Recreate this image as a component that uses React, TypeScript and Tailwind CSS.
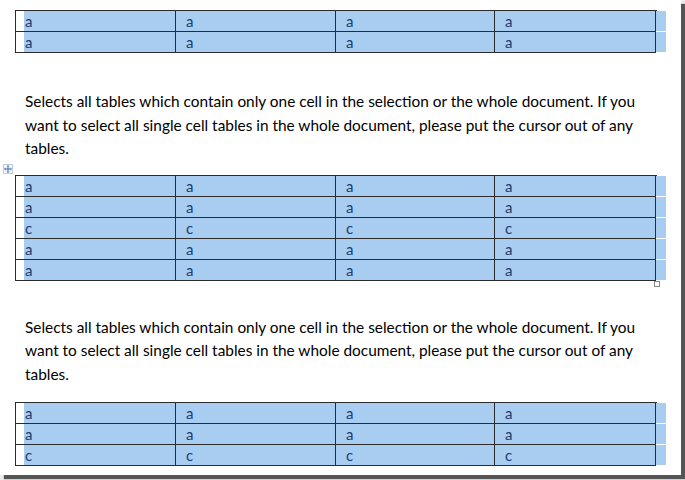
const FONT = { fontFamily: "Lato, 'Open Sans', sans-serif" };

type Row = string;

function TableRow({ letter }: { letter: Row }) {
  return (
    <div className="flex h-[21px]">
      <div className="flex border-l border-b border-[#2b2b2b]">
        <div className="w-[160px] h-full border-r border-[#2b2b2b]">
          <div className="ml-[8px] h-full bg-[#a9cdf1] pl-[1px] leading-[20px] text-[#1d3d6e]">{letter}</div>
        </div>
        <div className="w-[160px] h-full border-r border-[#2b2b2b] bg-[#a9cdf1] pl-[10px] leading-[20px] text-[#1d3d6e]">
          {letter}
        </div>
        <div className="w-[159px] h-full border-r border-[#2b2b2b] bg-[#a9cdf1] pl-[10px] leading-[20px] text-[#1d3d6e]">
          {letter}
        </div>
        <div className="w-[161px] h-full border-r border-[#2b2b2b] bg-[#a9cdf1] pl-[10px] leading-[20px] text-[#1d3d6e]">
          {letter}
        </div>
      </div>
      <div className="w-[10px] h-[20px] bg-[#a9cdf1]" />
    </div>
  );
}

function Table({ rows, handles }: { rows: Row[]; handles?: boolean }) {
  return (
    <div className="relative ml-[15px] w-fit text-[15px]">
      {handles && (
        <div className="absolute left-[-12px] top-[-11px] w-[10px] h-[10px] border border-[#c2ccd8] bg-[#f6f8fb] flex items-center justify-center">
          <svg width="8" height="8" viewBox="0 0 8 8">
            <path d="M4 1.5V6.5M1.5 4H6.5" stroke="#3a6cb4" strokeWidth="1" />
            <path d="M4 0L2.5 1.6H5.5ZM4 8L2.5 6.4H5.5ZM0 4L1.6 2.5V5.5ZM8 4L6.4 2.5V5.5Z" fill="#3a6cb4" />
          </svg>
        </div>
      )}
      <div className="border-t border-[#2b2b2b] w-[642px]" />
      {rows.map((r, i) => (
        <TableRow key={i} letter={r} />
      ))}
      {handles && (
        <div className="absolute left-[639px] bottom-[-6px] w-[6px] h-[6px] border border-[#8a8a8a] bg-white" />
      )}
    </div>
  );
}

function Para() {
  return (
    <p className="ml-[25px] text-[15.4px] leading-[23.5px] text-black whitespace-nowrap">
      Selects all tables which contain only one cell in the selection or the whole document. If you
      <br />
      want to select all single cell tables in the whole document, please put the cursor out of any
      <br />
      tables.
    </p>
  );
}

export default function App() {
  return (
    <div className="w-[685px] h-[480px] bg-[#ececec]" style={FONT}>
      <div className="w-[681px] h-[475px] bg-white shadow-[4px_4px_1px_#555] pt-[10px]">
        <Table rows={["a", "a"]} />
        <div className="h-[37px]" />
        <Para />
        <div className="h-[14px]" />
        <Table rows={["a", "a", "c", "a", "a"]} handles />
        <div className="h-[35px]" />
        <Para />
        <div className="h-[16px]" />
        <Table rows={["a", "a", "c"]} />
      </div>
    </div>
  );
}
